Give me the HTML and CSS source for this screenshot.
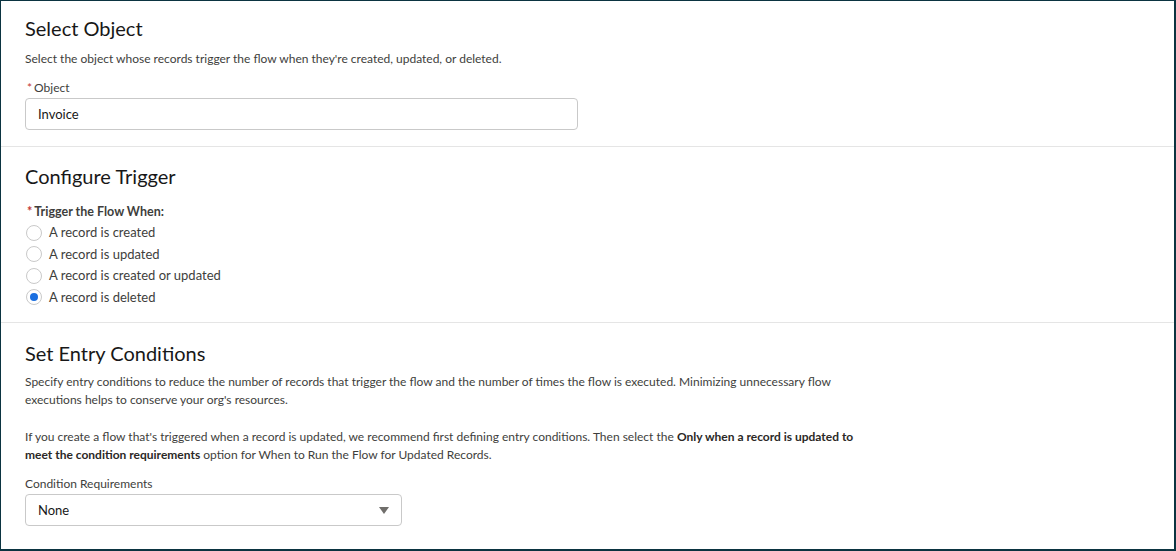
FILE: index.html
```html
<!DOCTYPE html>
<html lang="en">
<head>
<title>Start</title>
<meta name="viewport" content="width=device-width, initial-scale=1.0">
<link rel="stylesheet" href="styles.css">
</head>
<body>
<div class="panel">

  <!-- Select Object -->
  <div class="section first">
    <h2 class="title">Select Object</h2>
    <p class="desc">Select the object whose records trigger the flow when they're created, updated, or deleted.</p>
    <label class="field-label"><abbr class="req">*</abbr>Object</label>
    <div class="input object-input">Invoice</div>
  </div>

  <!-- Configure Trigger -->
  <div class="section trigger">
    <h2 class="title">Configure Trigger</h2>
    <p class="legend"><abbr class="req">*</abbr>Trigger the Flow When:</p>
    <div class="radios">
      <div class="radio"><span class="faux"></span>A record is created</div>
      <div class="radio"><span class="faux"></span>A record is updated</div>
      <div class="radio"><span class="faux"></span>A record is created or updated</div>
      <div class="radio checked"><span class="faux"></span>A record is deleted</div>
    </div>
  </div>

  <!-- Set Entry Conditions -->
  <div class="section last">
    <h2 class="title">Set Entry Conditions</h2>
    <p class="desc wide">Specify entry conditions to reduce the number of records that trigger the flow and the number of times the flow is executed. Minimizing unnecessary flow executions helps to conserve your org's resources.</p>
    <p class="desc wide">If you create a flow that's triggered when a record is updated, we recommend first defining entry conditions. Then select the <b>Only when a record is updated to meet the condition requirements</b> option for When to Run the Flow for Updated Records.</p>
    <label class="field-label">Condition Requirements</label>
    <div class="input select-input">None
      <svg class="caret" width="10" height="7" viewBox="0 0 10 7"><path d="M0 0 L10 0 L5 7 Z" fill="#706e6b"/></svg>
    </div>
  </div>

</div>
</body>
</html>
```

FILE: styles.css
```css
* {
  padding: 0;
  margin: 0;
  box-sizing: border-box;
}

html, body {
  height: 100%;
}

body {
  background-color: #fff;
  color: #3e3e3c;
  font-family: Lato, 'Noto Sans', sans-serif;
  overflow: hidden;
}

.panel {
  height: 551px;
  border-style: solid;
  border-color: #0b3441;
  border-width: 1px 2px 2px 1px;
  display: flex;
  flex-direction: column;
}

.section {
  padding: 15px 24px 0 24px;
  border-bottom: 1px solid #e5e5e5;
}

.section.first {
  height: 146px;
}

.section.trigger {
  height: 176px;
  padding-top: 17px;
}

.section.last {
  padding-top: 18px;
  border-bottom: none;
  flex-grow: 1;
}

.title {
  font-size: 20px;
  font-weight: 400;
  color: #181818;
  line-height: 24px;
  margin-bottom: 10px;
}

.section.last .title {
  margin-bottom: 8px;
}

.desc {
  font-size: 12px;
  line-height: 18px;
  color: #3e3e3c;
  margin-bottom: 12px;
}

.desc.wide {
  max-width: 840px;
  margin-bottom: 19px;
}

.desc.wide + .desc.wide {
  margin-bottom: 12px;
}

.desc b {
  font-weight: 700;
  color: #2b2826;
}

.field-label {
  display: block;
  font-size: 12px;
  line-height: 16px;
  color: #3e3e3c;
  margin-bottom: 2px;
}

.req {
  color: #c23934;
  text-decoration: none;
  margin: 0 2px 0 2px;
}

.input {
  height: 32px;
  border: 1px solid #c9c9c9;
  border-radius: 4px;
  padding: 0 12px;
  font-size: 13px;
  line-height: 30px;
  color: #181818;
  display: flex;
  align-items: center;
  justify-content: space-between;
}

.object-input {
  width: 553px;
}

.select-input {
  width: 377px;
}

.legend {
  font-size: 12.5px;
  font-weight: 700;
  color: #3e3e3c;
  line-height: 16px;
  padding-top: 6px;
  margin-bottom: 2px;
}

.radios {
  display: flex;
  flex-direction: column;
}

.radio {
  display: flex;
  align-items: center;
  font-size: 13px;
  line-height: 21.5px;
  color: #3e3e3c;
}

.faux {
  width: 16px;
  height: 16px;
  border: 1px solid #c9c9c9;
  border-radius: 50%;
  margin-right: 7px;
  margin-left: 1px;
  background-color: #fff;
  position: relative;
}

.radio.checked .faux::after {
  content: "";
  position: absolute;
  top: 3px;
  left: 3px;
  width: 8px;
  height: 8px;
  border-radius: 50%;
  background-color: #1b6fe0;
}
```
